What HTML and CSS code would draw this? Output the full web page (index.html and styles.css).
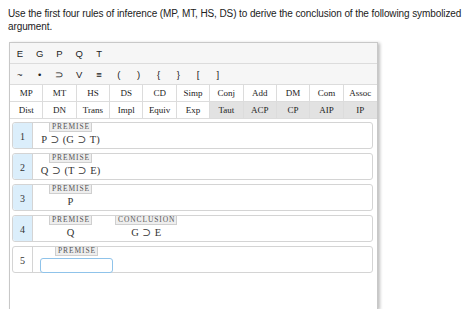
FILE: index.html
```html
<!DOCTYPE html>
<html>
<head>
<meta charset="utf-8">
<link rel="stylesheet" href="styles.css">
</head>
<body>
<p class="question">Use the first four rules of inference (MP, MT, HS, DS) to derive the conclusion of the following symbolized argument.</p>
<div class="panel">
  <div class="toolbar">
    <span class="key">E</span><span class="key">G</span><span class="key">P</span><span class="key">Q</span><span class="key">T</span>
  </div>
  <div class="toolbar">
    <span class="key">~</span><span class="key">•</span><span class="key">⊃</span><span class="key">V</span><span class="key">≡</span><span class="key">(</span><span class="key">)</span><span class="key">{</span><span class="key">}</span><span class="key">[</span><span class="key">]</span>
  </div>
  <div class="rules">
    <span class="rule">MP</span><span class="rule">MT</span><span class="rule">HS</span><span class="rule">DS</span><span class="rule">CD</span><span class="rule">Simp</span><span class="rule">Conj</span><span class="rule">Add</span><span class="rule">DM</span><span class="rule">Com</span><span class="rule">Assoc</span>
    <span class="rule">Dist</span><span class="rule">DN</span><span class="rule">Trans</span><span class="rule">Impl</span><span class="rule">Equiv</span><span class="rule">Exp</span><span class="rule off">Taut</span><span class="rule off">ACP</span><span class="rule off">CP</span><span class="rule off">AIP</span><span class="rule off">IP</span>
  </div>
  <div class="proof">
    <div class="line">
      <div class="num given">1</div>
      <div class="group"><span class="tag">PREMISE</span><span class="formula">P ⊃ (G ⊃ T)</span></div>
    </div>
    <div class="line">
      <div class="num given">2</div>
      <div class="group"><span class="tag">PREMISE</span><span class="formula">Q ⊃ (T ⊃ E)</span></div>
    </div>
    <div class="line">
      <div class="num given">3</div>
      <div class="group"><span class="tag">PREMISE</span><span class="formula">P</span></div>
    </div>
    <div class="line">
      <div class="num given">4</div>
      <div class="group"><span class="tag">PREMISE</span><span class="formula">Q</span></div>
      <div class="group concl"><span class="tag">CONCLUSION</span><span class="formula">G ⊃ E</span></div>
    </div>
    <div class="line">
      <div class="num">5</div>
      <div class="group"><span class="tag">PREMISE</span><input class="entry" type="text"></div>
    </div>
  </div>
</div>
</body>
</html>
```

FILE: styles.css
```css
html, body {
  margin: 0;
  padding: 0;
  background: #fff;
  overflow: hidden;
}
body {
  padding: 7px 2px 0 8px;
  font-family: "Liberation Sans", Arial, sans-serif;
  color: #222;
}
.question {
  margin: 0;
  font-size: 10px;
  line-height: 13px;
  letter-spacing: -0.1px;
}
.panel {
  margin: 9px 0 0 1px;
  width: 367px;
  height: 266px;
  border: 1px solid #c8c8c8;
  border-bottom: none;
  box-shadow: 2px 1px 3px rgba(0,0,0,0.25);
  background: #fff;
}
.toolbar {
  display: flex;
  height: 20px;
  align-items: center;
  background: #f6f6f6;
  border-bottom: 1px solid #dcdcdc;
}
.key {
  width: 19.8px;
  text-align: center;
  font-size: 9.5px;
  color: #222;
}
.rules {
  display: grid;
  grid-template-columns: repeat(11, 1fr);
}
.rule {
  height: 16px;
  line-height: 16px;
  text-align: center;
  font-family: "Liberation Serif", "DejaVu Serif", serif;
  font-size: 9px;
  color: #222;
  border-right: 1px solid #dcdcdc;
  border-bottom: 1px solid #dcdcdc;
  background: #fff;
}
.rule:nth-child(11n) { border-right: none; }
.rule.off { background: #e2e2e2; }
.proof {
  display: flex;
  flex-direction: column;
  gap: 4px;
  padding: 3px 4px 0 2px;
}
.line {
  display: flex;
  height: 25px;
  border: 1px solid #d4d4d4;
  border-radius: 3px;
  background: #fff;
}
.num {
  width: 19px;
  border-right: 1px solid #d4d4d4;
  display: flex;
  align-items: center;
  justify-content: center;
  font-family: "Liberation Serif", "DejaVu Serif", serif;
  font-size: 10px;
  color: #333;
  padding-top: 2px;
  border-radius: 3px 0 0 3px;
}
.num.given { background: #dbeefb; }
.group {
  display: flex;
  flex-direction: column;
  align-items: center;
  min-width: 61px;
  margin-left: 7px;
}
.group.concl {
  margin-left: 14px;
}
.tag {
  font-family: "Liberation Serif", "DejaVu Serif", serif;
  font-size: 7.5px;
  line-height: 8px;
  letter-spacing: 0.9px;
  color: #555;
  background: #eeeeee;
  border: 1px solid #cfcfcf;
  border-top: none;
  padding: 0 1px 0 2px;
}
.formula {
  font-family: "Liberation Serif", "DejaVu Serif", serif;
  font-size: 10.5px;
  line-height: 13px;
  margin-top: 1px;
  color: #333;
  word-spacing: 1px;
}
.entry {
  margin: 2px 0 0 0;
  width: 73px;
  height: 15px;
  box-sizing: border-box;
  border: 1px solid #8fc3ea;
  border-radius: 3px;
  padding: 0;
  background: #fff;
  outline: none;
}
```
